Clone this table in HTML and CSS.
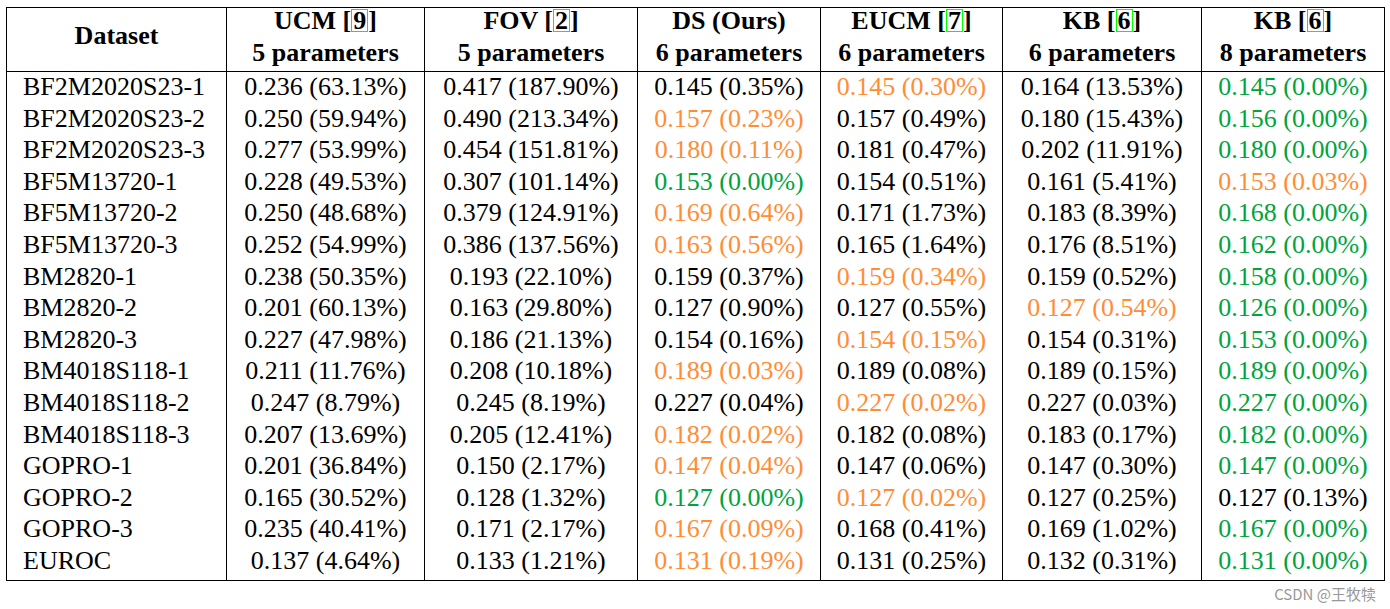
FILE: index.html
```html
<!DOCTYPE html>
<html>
<head>
<meta charset="utf-8">
<link rel="stylesheet" href="styles.css">
</head>
<body>
<div class="page">
<table class="res">
<colgroup>
<col class="c1"><col class="c2"><col class="c3"><col class="c4"><col class="c5"><col class="c6"><col class="c7">
</colgroup>
<thead>
<tr>
<th class="ds">Dataset</th>
<th><div class="h">UCM [<span class="cite">9</span>]<br>5 parameters</div></th>
<th><div class="h">FOV [<span class="cite">2</span>]<br>5 parameters</div></th>
<th><div class="h">DS (Ours)<br>6 parameters</div></th>
<th><div class="h">EUCM [<span class="cite">7</span>]<br>6 parameters</div></th>
<th><div class="h">KB [<span class="cite">6</span>]<br>6 parameters</div></th>
<th><div class="h">KB [<span class="cite">6</span>]<br>8 parameters</div></th>
</tr>
</thead>
<tbody>
<tr><td class="name">BF2M2020S23-1</td><td>0.236 (63.13%)</td><td>0.417 (187.90%)</td><td>0.145 (0.35%)</td><td class="o">0.145 (0.30%)</td><td>0.164 (13.53%)</td><td class="g">0.145 (0.00%)</td></tr>
<tr><td class="name">BF2M2020S23-2</td><td>0.250 (59.94%)</td><td>0.490 (213.34%)</td><td class="o">0.157 (0.23%)</td><td>0.157 (0.49%)</td><td>0.180 (15.43%)</td><td class="g">0.156 (0.00%)</td></tr>
<tr><td class="name">BF2M2020S23-3</td><td>0.277 (53.99%)</td><td>0.454 (151.81%)</td><td class="o">0.180 (0.11%)</td><td>0.181 (0.47%)</td><td>0.202 (11.91%)</td><td class="g">0.180 (0.00%)</td></tr>
<tr><td class="name">BF5M13720-1</td><td>0.228 (49.53%)</td><td>0.307 (101.14%)</td><td class="g">0.153 (0.00%)</td><td>0.154 (0.51%)</td><td>0.161 (5.41%)</td><td class="o">0.153 (0.03%)</td></tr>
<tr><td class="name">BF5M13720-2</td><td>0.250 (48.68%)</td><td>0.379 (124.91%)</td><td class="o">0.169 (0.64%)</td><td>0.171 (1.73%)</td><td>0.183 (8.39%)</td><td class="g">0.168 (0.00%)</td></tr>
<tr><td class="name">BF5M13720-3</td><td>0.252 (54.99%)</td><td>0.386 (137.56%)</td><td class="o">0.163 (0.56%)</td><td>0.165 (1.64%)</td><td>0.176 (8.51%)</td><td class="g">0.162 (0.00%)</td></tr>
<tr><td class="name">BM2820-1</td><td>0.238 (50.35%)</td><td>0.193 (22.10%)</td><td>0.159 (0.37%)</td><td class="o">0.159 (0.34%)</td><td>0.159 (0.52%)</td><td class="g">0.158 (0.00%)</td></tr>
<tr><td class="name">BM2820-2</td><td>0.201 (60.13%)</td><td>0.163 (29.80%)</td><td>0.127 (0.90%)</td><td>0.127 (0.55%)</td><td class="o">0.127 (0.54%)</td><td class="g">0.126 (0.00%)</td></tr>
<tr><td class="name">BM2820-3</td><td>0.227 (47.98%)</td><td>0.186 (21.13%)</td><td>0.154 (0.16%)</td><td class="o">0.154 (0.15%)</td><td>0.154 (0.31%)</td><td class="g">0.153 (0.00%)</td></tr>
<tr><td class="name">BM4018S118-1</td><td>0.211 (11.76%)</td><td>0.208 (10.18%)</td><td class="o">0.189 (0.03%)</td><td>0.189 (0.08%)</td><td>0.189 (0.15%)</td><td class="g">0.189 (0.00%)</td></tr>
<tr><td class="name">BM4018S118-2</td><td>0.247 (8.79%)</td><td>0.245 (8.19%)</td><td>0.227 (0.04%)</td><td class="o">0.227 (0.02%)</td><td>0.227 (0.03%)</td><td class="g">0.227 (0.00%)</td></tr>
<tr><td class="name">BM4018S118-3</td><td>0.207 (13.69%)</td><td>0.205 (12.41%)</td><td class="o">0.182 (0.02%)</td><td>0.182 (0.08%)</td><td>0.183 (0.17%)</td><td class="g">0.182 (0.00%)</td></tr>
<tr><td class="name">GOPRO-1</td><td>0.201 (36.84%)</td><td>0.150 (2.17%)</td><td class="o">0.147 (0.04%)</td><td>0.147 (0.06%)</td><td>0.147 (0.30%)</td><td class="g">0.147 (0.00%)</td></tr>
<tr><td class="name">GOPRO-2</td><td>0.165 (30.52%)</td><td>0.128 (1.32%)</td><td class="g">0.127 (0.00%)</td><td class="o">0.127 (0.02%)</td><td>0.127 (0.25%)</td><td>0.127 (0.13%)</td></tr>
<tr><td class="name">GOPRO-3</td><td>0.235 (40.41%)</td><td>0.171 (2.17%)</td><td class="o">0.167 (0.09%)</td><td>0.168 (0.41%)</td><td>0.169 (1.02%)</td><td class="g">0.167 (0.00%)</td></tr>
<tr class="last"><td class="name">EUROC</td><td>0.137 (4.64%)</td><td>0.133 (1.21%)</td><td class="o">0.131 (0.19%)</td><td>0.131 (0.25%)</td><td>0.132 (0.31%)</td><td class="g">0.131 (0.00%)</td></tr>
</tbody>
</table>
<div class="wm">CSDN @王牧犊</div>
</div>
</body>
</html>
```

FILE: styles.css
```css
html, body {
  margin: 0;
  padding: 0;
  background: #fff;
}
.page {
  padding: 7px 0 0 6px;
}
.res {
  border-collapse: collapse;
  table-layout: fixed;
  width: 1378px;
  font-family: "Liberation Serif", "Times New Roman", serif;
  font-size: 26px;
  color: #000;
}
.c1 { width: 220px; }
.c2 { width: 198px; }
.c3 { width: 213px; }
.c4 { width: 183px; }
.c5 { width: 182px; }
.c6 { width: 199px; }
.c7 { width: 183px; }
.res th, .res td {
  border-left: 1px solid #000;
  border-right: 1px solid #000;
  padding: 0;
  white-space: nowrap;
  text-align: center;
}
.res thead tr {
  height: 64px;
}
.res th {
  font-weight: bold;
  border-top: 1px solid #000;
  border-bottom: 1px solid #000;
  vertical-align: top;
  line-height: 32.4px;
}
.res th .h {
  margin-top: -3px;
}
.res th.ds {
  vertical-align: middle;
  padding-bottom: 7px;
}
.res td {
  line-height: 29.6px;
  padding-bottom: 2px;
}
.res tr.last td {
  padding-bottom: 4.4px;
  border-bottom: 1px solid #000;
}
.res td.name {
  text-align: left;
  padding-left: 16px;
}
.cite {
  display: inline-block;
  line-height: 21px;
  padding: 0 1px;
  border: 1px solid #00ff00;
}
.o { color: #ff8d36; }
.g { color: #00a43c; }
.wm {
  width: 1370px;
  text-align: right;
  margin-top: 3px;
  font-family: "Noto Sans CJK SC", "Liberation Sans", sans-serif;
  font-size: 15px;
  line-height: 20px;
  color: #999999;
}
```
